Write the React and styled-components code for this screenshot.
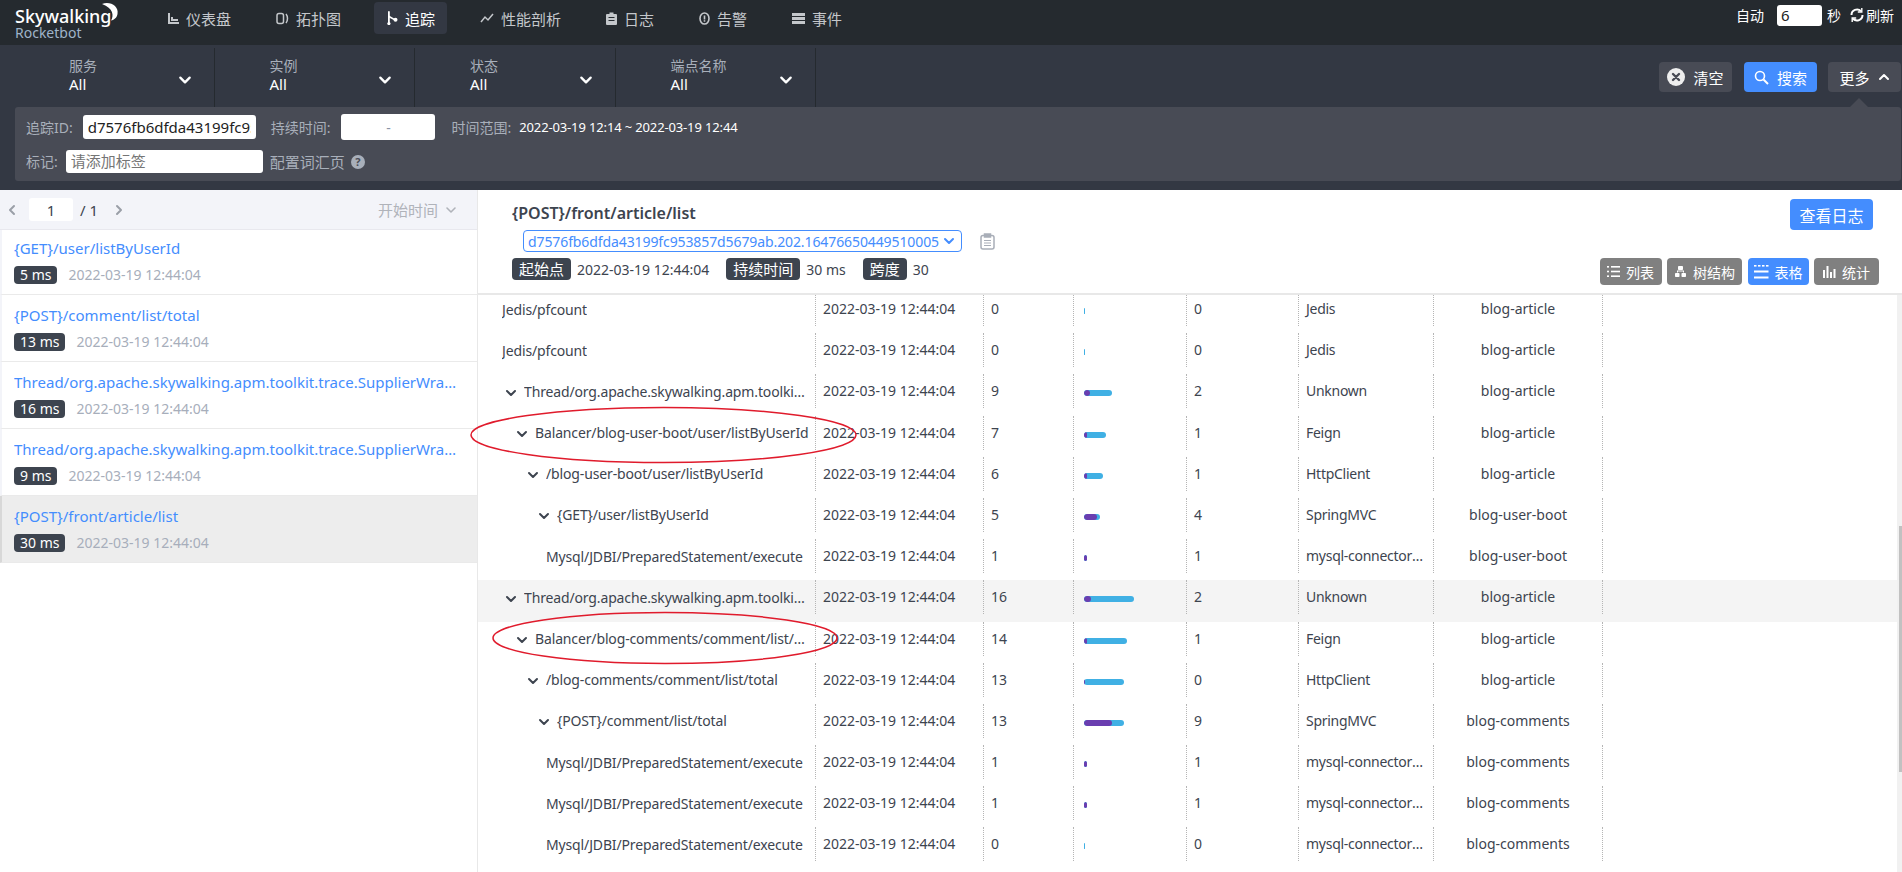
import React from 'react'
import styled, { createGlobalStyle } from 'styled-components'

const GlobalStyle = createGlobalStyle`
  html, body {
    margin: 0;
    padding: 0;
    height: 100%;
    overflow: hidden;
  }
  body {
    font-family: "Noto Sans", "Noto Sans CJK SC", sans-serif;
    font-size: 14px;
    color: #3d444f;
    background: #fff;
  }
  * {
    box-sizing: border-box;
  }
  input {
    font-family: inherit;
  }
`

const Page = styled.div`
  position: relative;
  display: flex;
  flex-direction: column;
  height: 872px;
  overflow: hidden;
`

/* top nav */
const Header = styled.header`
  display: flex;
  align-items: flex-start;
  height: 45px;
  padding: 2px 8px 0 15px;
  background: #252a2f;
  color: #fff;
`
const Logo = styled.div`
  position: relative;
  width: 141px;
  flex: none;
  margin-top: 4px;
`
const LogoTitle = styled.div`
  font-size: 18px;
  line-height: 21px;
  color: #fff;
  font-weight: 500;
`
const LogoSub = styled.div`
  font-size: 14px;
  line-height: 12px;
  color: #9fb4c9;
`
const LogoMark = styled.svg`
  position: absolute;
  left: 85px;
  top: -5px;
`
const Nav = styled.nav`
  display: flex;
  gap: 21px;
`
const NavItem = styled.a`
  display: flex;
  align-items: center;
  justify-content: center;
  gap: 7px;
  height: 32px;
  padding: 0 12px;
  border-radius: 4px;
  font-size: 15px;
  color: ${p => (p.$active ? '#fff' : '#c4c7cb')};
  background: ${p => (p.$active ? '#333843' : 'transparent')};
`
const RefreshBar = styled.div`
  display: flex;
  align-items: center;
  margin-left: auto;
  height: 26px;
  font-size: 14px;
  color: #fff;
`
const AutoInput = styled.input`
  width: 45px;
  height: 21px;
  margin: 0 5px 0 13px;
  padding: 0 0 0 4px;
  border: 0;
  border-radius: 3px;
  background: #fff;
  color: #222;
  font-size: 15px;
`
const RefreshIcon = styled.svg`
  margin: 0 1px 0 8px;
`

/* filter toolbar */
const Toolbar = styled.section`
  height: 145px;
  padding-top: 3px;
  background: #333843;
  color: #fff;
`
const FilterRow = styled.div`
  display: flex;
  align-items: flex-start;
  height: 59px;
  padding-left: 14px;
`
const Filter = styled.div`
  position: relative;
  width: 200.5px;
  height: 59px;
  padding: 8px 0 0 55px;
  border-right: 1px solid #252a2f;
`
const FilterLabel = styled.div`
  font-size: 14px;
  line-height: 20px;
  color: #a8afba;
`
const FilterValue = styled.div`
  font-size: 15px;
  line-height: 16px;
`
const FilterChevron = styled.span`
  position: absolute;
  right: 22px;
  top: 25px;
  line-height: 0;
`
const Actions = styled.div`
  display: flex;
  gap: 12px;
  margin: 14px 1px 0 auto;
`
const ActionButton = styled.button`
  display: flex;
  align-items: center;
  justify-content: center;
  gap: 8px;
  width: 73px;
  height: 30px;
  padding: 0;
  border: 0;
  border-radius: 4px;
  font: inherit;
  font-size: 15px;
  color: #fff;
  background: ${p => (p.$primary ? '#448dfe' : '#484b55')};
`
const MoreWrap = styled.div`
  position: relative;
  margin-left: -1px;
`
const MoreArrow = styled.span`
  position: absolute;
  left: 22px;
  top: 36px;
  width: 0;
  height: 0;
  border-left: 9px solid transparent;
  border-right: 9px solid transparent;
  border-bottom: 9px solid #484b55;
`
const MorePanel = styled.div`
  height: 74px;
  margin: 0 1px 0 15px;
  padding: 7px 11px 0;
  border-radius: 3px;
  background: #484b55;
  font-size: 14px;
  color: #a8afba;
`
const PanelRow = styled.div`
  display: flex;
  align-items: center;
  height: 26px;
  margin-bottom: ${p => (p.$gap ? '8px' : '0')};
`
const PanelInput = styled.input`
  flex: none;
  width: ${p => p.$w}px;
  height: ${p => p.$h || 24}px;
  margin: 0 ${p => p.$mr || 7}px 0 ${p => p.$ml || 10}px;
  padding: 0 ${p => (p.$center ? 0 : 5)}px;
  border: 0;
  border-radius: 3px;
  outline: 0;
  background: #fff;
  color: ${p => p.$color || '#222'};
  font-size: ${p => (p.$center ? 14 : 15)}px;
  text-align: ${p => (p.$center ? 'center' : 'left')};
  &::placeholder {
    color: #757575;
    opacity: 1;
    font-size: 15px;
  }
`
const RangeValue = styled.span`
  margin-left: 8px;
  font-size: 13px;
  letter-spacing: -0.14px;
  color: #fff;
`
const GlossaryLink = styled.span`
  font-size: 15px;
`
const HelpDot = styled.span`
  display: inline-block;
  width: 14px;
  height: 14px;
  margin: 2px 0 0 6px;
  border-radius: 50%;
  background: #a8afba;
  color: #484b55;
  font-size: 11px;
  font-weight: 700;
  line-height: 14px;
  text-align: center;
`

/* main split */
const Main = styled.main`
  display: flex;
  flex: 1;
  min-height: 0;
`
const Sidebar = styled.aside`
  flex: none;
  width: 478px;
  border-right: 1px solid #e8e8e8;
`
const Pager = styled.div`
  display: flex;
  align-items: center;
  height: 40px;
  padding: 0 15px 0 6px;
  background: #f3f4f9;
  border-bottom: 1px solid #e8e8ee;
  font-size: 15px;
`
const PageInput = styled.input`
  width: 44px;
  height: 23px;
  margin: 0 7px 0 11px;
  padding: 0;
  border: 0;
  border-radius: 3px;
  background: #fff;
  color: #3d444f;
  font-size: 15px;
  text-align: center;
`
const PagerNext = styled.span`
  margin-left: 15px;
  line-height: 0;
`
const SortBy = styled.div`
  display: flex;
  align-items: center;
  gap: 7px;
  margin-left: auto;
  margin-right: 5px;
  color: #b0b3ba;
`
const TraceItem = styled.div`
  height: ${p => (p.$first ? 65 : 67)}px;
  padding-top: ${p => (p.$first ? 6 : 8)}px;
  padding-left: 12px;
  border-left: 2px solid ${p => (p.$active ? '#d8d8d8' : '#f3f4f9')};
  border-bottom: 1px solid #eaeaea;
  background: ${p => (p.$active ? '#ededed' : '#fff')};
`
const TraceTitle = styled.div`
  width: 448px;
  font-size: 15px;
  line-height: 24px;
  color: #448dfe;
  white-space: nowrap;
  overflow: hidden;
  text-overflow: ellipsis;
`
const TraceMeta = styled.div`
  display: flex;
  align-items: center;
  gap: 11px;
  margin-top: 5px;
  color: #a7aebb;
`
const Badge = styled.span`
  padding: 0 6px;
  height: 18px;
  border-radius: 4px;
  background: #3d444f;
  color: #fff;
  font-size: 14px;
  line-height: 18px;
`

const Detail = styled.section`
  position: relative;
  flex: 1;
  min-width: 0;
  display: flex;
  flex-direction: column;
`
const DetailHead = styled.div`
  position: relative;
  flex: none;
  height: 105px;
  padding: 12px 0 0 34px;
  border-bottom: 2px solid #e8e8e8;
`
const DetailTitle = styled.h2`
  margin: 0;
  font-size: 16px;
  font-weight: 600;
  line-height: 22px;
  color: #3d444f;
`
const SelectRow = styled.div`
  display: flex;
  align-items: center;
  margin: 6px 0 6px 11px;
`
const SegmentSelect = styled.div`
  display: flex;
  align-items: center;
  justify-content: space-between;
  width: 439px;
  height: 22px;
  padding: 0 6px 0 4px;
  border: 1px solid #448dfe;
  border-radius: 4px;
  color: #448dfe;
  font-size: 14px;
  letter-spacing: -0.1px;
  white-space: nowrap;
  overflow: hidden;
`
const CopyIcon = styled.svg`
  margin-left: 18px;
`
const TagRow = styled.div`
  display: flex;
  align-items: center;
  height: 22px;
  font-size: 14px;
`
const Tag = styled.span`
  height: 22px;
  margin-right: 6px;
  padding: 0 7px;
  border-radius: 4px;
  background: #3d444f;
  color: #fff;
  font-size: 15px;
  line-height: 22px;
`
const TagValue = styled.span`
  margin-right: 17px;
`
const LogButton = styled.button`
  position: absolute;
  right: 29px;
  top: 9px;
  width: 83px;
  height: 31px;
  padding: 0;
  border: 0;
  border-radius: 4px;
  background: #448dfe;
  color: #fff;
  font: inherit;
  font-size: 16px;
`
const ViewTabs = styled.div`
  position: absolute;
  right: 23px;
  top: 68px;
  display: flex;
  gap: 5.5px;
`
const ViewTab = styled.span`
  display: flex;
  align-items: center;
  justify-content: center;
  gap: 6px;
  width: ${p => p.$w}px;
  height: 27px;
  border-radius: 4px;
  background: ${p => (p.$active ? '#448dfe' : '#808080')};
  color: #fff;
  font-size: 14px;
`

/* span table */
const TableArea = styled.div`
  flex: 1;
  min-height: 0;
  display: flex;
`
const TableBody = styled.div`
  flex: 1;
  min-width: 0;
  overflow: hidden;
`
const Rows = styled.div`
  margin-top: -3px;
`
const Row = styled.div`
  display: flex;
  height: 41.2px;
  background: ${p => (p.$active ? '#f4f4f4' : '#fff')};
`
const NameCell = styled.div`
  display: flex;
  align-items: center;
  flex: none;
  width: 337px;
  height: 34px;
  padding-left: ${p => 24 + p.$level * 11}px;
  padding-right: 6px;
  white-space: nowrap;
`
const Toggle = styled.span`
  flex: none;
  width: 22px;
  padding-left: 3px;
  line-height: 0;
  margin-top: 3px;
`
const NameText = styled.span`
  letter-spacing: -0.14px;
  overflow: hidden;
  text-overflow: ellipsis;
`
const Cell = styled.div`
  flex: none;
  width: ${p => p.$w}px;
  height: 34px;
  padding-left: ${p => (p.$center ? 0 : 7)}px;
  padding-right: ${p => (p.$center ? 0 : 7)}px;
  border-left: 1px dotted #b5b5b5;
  line-height: 34px;
  white-space: nowrap;
  overflow: hidden;
  text-overflow: ellipsis;
  text-align: ${p => (p.$center ? 'center' : 'left')};
  letter-spacing: ${p => (p.$tight ? '-0.27px' : 'normal')};
`
const BarCell = styled(Cell)`
  padding-left: 10px;
  padding-top: 16px;
  line-height: 0;
`
const BarOuter = styled.div`
  height: 6px;
  border-radius: 3px;
  background: #40b0e4;
  overflow: hidden;
`
const BarInner = styled.div`
  height: 6px;
  border-radius: 3px;
  background: #6a3eb0;
`
const Scrollbar = styled.div`
  flex: none;
  width: 5px;
  background: #f1f1f1;
  padding: 231px 0 0 2px;
`
const Thumb = styled.div`
  height: 246px;
  background: #c1c1c1;
`
const Annotation = styled.svg`
  position: absolute;
  left: 0;
  top: 0;
  pointer-events: none;
`

const Chevron = ({ size = 12, color = '#fff', up, width = 2, dir }) => {
  let pts = up ? '2,8 6,4 10,8' : '2,4 6,8 10,4'
  if (dir === 'left') pts = '8,2 4,6 8,10'
  if (dir === 'right') pts = '4,2 8,6 4,10'
  return (
    <svg width={size} height={size} viewBox="0 0 12 12" fill="none">
      <polyline points={pts} stroke={color} strokeWidth={width} strokeLinecap="round" strokeLinejoin="round" />
    </svg>
  )
}

const navIcons = {
  dashboard: (
    <svg width="11" height="12" viewBox="0 0 11 12" fill="currentColor">
      <path d="M0 1h2v9h9v2H0z" />
      <path d="M3 5h2v4H3zM5 7h5v2H5z" />
    </svg>
  ),
  topology: (
    <svg width="13" height="13" viewBox="0 0 13 13" fill="none" stroke="currentColor" strokeWidth="1.5">
      <rect x="1" y="1.5" width="6.5" height="10" rx="2" />
      <path d="M10 2c2 2.5 2 6.5 0 9" />
    </svg>
  ),
  trace: (
    <svg width="12" height="14" viewBox="0 0 12 14" fill="currentColor">
      <rect x="2" y="0" width="1.8" height="14" rx="0.9" />
      <path d="M3 4.5 9 8l-.8 1.3L3 6.5z" />
      <circle cx="9.5" cy="8.8" r="2" />
      <circle cx="2.9" cy="12.5" r="1.6" />
    </svg>
  ),
  profile: (
    <svg width="14" height="10" viewBox="0 0 14 10" fill="none" stroke="currentColor" strokeWidth="1.5">
      <polyline points="1,9 5,4 8,7 13,1" />
    </svg>
  ),
  log: (
    <svg width="11" height="13" viewBox="0 0 11 13" fill="currentColor">
      <path d="M1 2h2.5V.5h4V2H10a1 1 0 0 1 1 1v9a1 1 0 0 1-1 1H1a1 1 0 0 1-1-1V3a1 1 0 0 1 1-1zm1.5 3v1h6V5zm0 3v1h6V8z" fillRule="evenodd" />
    </svg>
  ),
  alarm: (
    <svg width="11" height="13" viewBox="0 0 11 13" fill="none">
      <ellipse cx="5.5" cy="6.5" rx="4.5" ry="5.5" stroke="currentColor" strokeWidth="1.6" />
      <rect x="4.7" y="3.5" width="1.6" height="4" fill="currentColor" />
      <rect x="4.7" y="8.2" width="1.6" height="1.5" fill="currentColor" />
    </svg>
  ),
  event: (
    <svg width="13" height="11" viewBox="0 0 13 11" fill="currentColor">
      <rect width="13" height="3" />
      <rect y="4" width="13" height="3" />
      <rect y="8" width="13" height="3" />
    </svg>
  ),
}

const viewIcons = {
  list: (
    <svg width="13" height="13" viewBox="0 0 13 13" fill="#fff">
      <rect x="0" y="1" width="2" height="1.6" />
      <rect x="4" y="1" width="9" height="1.6" />
      <rect x="0" y="5.7" width="2" height="1.6" />
      <rect x="4" y="5.7" width="9" height="1.6" />
      <rect x="0" y="10.4" width="2" height="1.6" />
      <rect x="4" y="10.4" width="9" height="1.6" />
    </svg>
  ),
  tree: (
    <svg width="13" height="13" viewBox="0 0 13 13" fill="#fff">
      <rect x="4" y="1" width="5" height="4" rx="0.8" />
      <rect x="1" y="8" width="4.5" height="4" rx="0.8" />
      <rect x="7.5" y="8" width="4.5" height="4" rx="0.8" />
      <path d="M3 5.5h7v2H9v-1H4v1H3z" />
    </svg>
  ),
  table: (
    <svg width="15" height="14" viewBox="0 0 15 14" fill="#fff">
      <rect x="0" y="0" width="2.5" height="1.6" />
      <rect x="4" y="0" width="2.5" height="1.6" />
      <rect x="8" y="0" width="2.5" height="1.6" />
      <rect x="12" y="0" width="2.5" height="1.6" />
      <rect x="0" y="5.5" width="14.5" height="2" />
      <rect x="0" y="11.5" width="14.5" height="2" />
    </svg>
  ),
  stats: (
    <svg width="13" height="12" viewBox="0 0 13 12" fill="#fff">
      <rect x="0" y="4" width="2" height="8" />
      <rect x="3.5" y="0" width="2" height="12" />
      <rect x="7" y="6" width="2" height="6" />
      <rect x="10.5" y="3" width="2" height="9" />
    </svg>
  ),
}

const navItems = [
  { label: '仪表盘', icon: 'dashboard' },
  { label: '拓扑图', icon: 'topology' },
  { label: '追踪', icon: 'trace', active: true },
  { label: '性能剖析', icon: 'profile' },
  { label: '日志', icon: 'log' },
  { label: '告警', icon: 'alarm' },
  { label: '事件', icon: 'event' },
]

const filters = [
  { label: '服务' },
  { label: '实例' },
  { label: '状态' },
  { label: '端点名称' },
]

const traces = [
  { title: '{GET}/user/listByUserId', ms: '5 ms' },
  { title: '{POST}/comment/list/total', ms: '13 ms' },
  { title: 'Thread/org.apache.skywalking.apm.toolkit.trace.SupplierWrapper/run', ms: '16 ms' },
  { title: 'Thread/org.apache.skywalking.apm.toolkit.trace.SupplierWrapper/run', ms: '9 ms' },
  { title: '{POST}/front/article/list', ms: '30 ms', active: true },
]

const TRACE_ID = 'd7576fb6dfda43199fc953857d5679ab.202.16476650449510005'
const DATE = '2022-03-19 12:44:04'
const MYSQL = 'Mysql/JDBI/PreparedStatement/execute'
const THREAD = 'Thread/org.apache.skywalking.apm.toolkit.trace.SupplierWrapper/run'

const spans = [
  { name: 'Jedis/pfcount', level: 0, exec: 0, bar: 1, inner: 0, self: 0, type: 'Jedis', svc: 'blog-article' },
  { name: 'Jedis/pfcount', level: 0, exec: 0, bar: 1, inner: 0, self: 0, type: 'Jedis', svc: 'blog-article' },
  { name: THREAD, level: 0, open: true, exec: 9, bar: 28, inner: 6, self: 2, type: 'Unknown', svc: 'blog-article' },
  { name: 'Balancer/blog-user-boot/user/listByUserId', level: 1, open: true, exec: 7, bar: 22, inner: 3, self: 1, type: 'Feign', svc: 'blog-article' },
  { name: '/blog-user-boot/user/listByUserId', level: 2, open: true, exec: 6, bar: 19, inner: 3, self: 1, type: 'HttpClient', svc: 'blog-article' },
  { name: '{GET}/user/listByUserId', level: 3, open: true, exec: 5, bar: 16, inner: 13, self: 4, type: 'SpringMVC', svc: 'blog-user-boot' },
  { name: MYSQL, level: 4, exec: 1, bar: 3, inner: 3, self: 1, type: 'mysql-connector-java', svc: 'blog-user-boot' },
  { name: THREAD, level: 0, open: true, active: true, exec: 16, bar: 50, inner: 7, self: 2, type: 'Unknown', svc: 'blog-article' },
  { name: 'Balancer/blog-comments/comment/list/total', level: 1, open: true, exec: 14, bar: 43, inner: 3, self: 1, type: 'Feign', svc: 'blog-article' },
  { name: '/blog-comments/comment/list/total', level: 2, open: true, exec: 13, bar: 40, inner: 1, self: 0, type: 'HttpClient', svc: 'blog-article' },
  { name: '{POST}/comment/list/total', level: 3, open: true, exec: 13, bar: 40, inner: 28, self: 9, type: 'SpringMVC', svc: 'blog-comments' },
  { name: MYSQL, level: 4, exec: 1, bar: 3, inner: 3, self: 1, type: 'mysql-connector-java', svc: 'blog-comments' },
  { name: MYSQL, level: 4, exec: 1, bar: 3, inner: 3, self: 1, type: 'mysql-connector-java', svc: 'blog-comments' },
  { name: MYSQL, level: 4, exec: 0, bar: 1, inner: 0, self: 0, type: 'mysql-connector-java', svc: 'blog-comments' },
]

const SpanRow = ({ span }) => (
  <Row $active={span.active}>
    <NameCell $level={span.level}>
      {span.open && (
        <Toggle>
          <Chevron color="#3d444f" size={12} />
        </Toggle>
      )}
      <NameText>{span.name}</NameText>
    </NameCell>
    <Cell $w={168}>{DATE}</Cell>
    <Cell $w={90}>{span.exec}</Cell>
    <BarCell $w={113}>
      <BarOuter style={{ width: span.bar }}>
        <BarInner style={{ width: span.inner }} />
      </BarOuter>
    </BarCell>
    <Cell $w={112}>{span.self}</Cell>
    <Cell $w={135} $tight>{span.type}</Cell>
    <Cell $w={169} $center>{span.svc}</Cell>
    <Cell $w={1} />
  </Row>
)

export default function App() {
  return (
    <Page>
      <GlobalStyle />
      <Header>
        <Logo>
          <LogoTitle>Skywalking</LogoTitle>
          <LogoSub>Rocketbot</LogoSub>
          <LogoMark width="20" height="22" viewBox="0 0 20 22" fill="#fff">
            <path d="M2 3C10 0 19 5 17.5 13c-.6 3.4-3 6-6.500 6.500C14 15 13.500 7 2 3z" />
          </LogoMark>
        </Logo>
        <Nav>
          {navItems.map(item => (
            <NavItem key={item.label} $active={item.active}>
              {navIcons[item.icon]}
              {item.label}
            </NavItem>
          ))}
        </Nav>
        <RefreshBar>
          自动
          <AutoInput readOnly value="6" />
          秒
          <RefreshIcon width="16" height="16" viewBox="0 0 16 16" fill="none" stroke="#fff" strokeWidth="2">
            <path d="M2.500 8a5.500 5.500 0 0 1 9.500-3.800M13.500 8A5.500 5.500 0 0 1 4 11.800" />
            <path d="M12.800 1v4h-4M3.200 15v-4h4" strokeWidth="1.400" />
          </RefreshIcon>
          刷新
        </RefreshBar>
      </Header>

      <Toolbar>
        <FilterRow>
          {filters.map(f => (
            <Filter key={f.label}>
              <FilterLabel>{f.label}</FilterLabel>
              <FilterValue>All</FilterValue>
              <FilterChevron>
                <Chevron size={14} width={2} />
              </FilterChevron>
            </Filter>
          ))}
          <Actions>
            <ActionButton>
              <svg width="18" height="18" viewBox="0 0 18 18">
                <circle cx="9" cy="9" r="9" fill="#eee" />
                <path d="M6 6l6 6M12 6l-6 6" stroke="#484b55" strokeWidth="2.400" strokeLinecap="round" />
              </svg>
              清空
            </ActionButton>
            <ActionButton $primary>
              <svg width="15" height="15" viewBox="0 0 15 15" fill="none" stroke="#fff" strokeWidth="1.600">
                <circle cx="6" cy="6" r="4.500" />
                <path d="M9.500 9.500 14 14" strokeWidth="2" />
              </svg>
              搜索
            </ActionButton>
            <MoreWrap>
              <ActionButton>
                更多
                <Chevron size={12} up width={2} />
              </ActionButton>
              <MoreArrow />
            </MoreWrap>
          </Actions>
        </FilterRow>
        <MorePanel>
          <PanelRow $gap>
            追踪ID:
            <PanelInput $w={173} $mr={15} readOnly value={TRACE_ID} />
            持续时间:
            <PanelInput $w={94} $h={26} $ml={11} $mr={16} $center $color="#8a94a6" readOnly value="-" />
            时间范围:
            <RangeValue>2022-03-19 12:14 ~ 2022-03-19 12:44</RangeValue>
          </PanelRow>
          <PanelRow>
            标记:
            <PanelInput $w={197} $h={23} $ml={8} placeholder="请添加标签" />
            <GlossaryLink>配置词汇页</GlossaryLink>
            <HelpDot>?</HelpDot>
          </PanelRow>
        </MorePanel>
      </Toolbar>

      <Main>
        <Sidebar>
          <Pager>
            <Chevron size={12} color="#9a9fa8" dir="left" />
            <PageInput readOnly value="1" />
            / 1
            <PagerNext>
              <Chevron size={12} color="#9a9fa8" dir="right" />
            </PagerNext>
            <SortBy>
              开始时间
              <Chevron size={12} color="#b0b3ba" width={1.600} />
            </SortBy>
          </Pager>
          {traces.map((t, i) => (
            <TraceItem key={i} $active={t.active} $first={i === 0}>
              <TraceTitle>{t.title}</TraceTitle>
              <TraceMeta>
                <Badge>{t.ms}</Badge>
                {DATE}
              </TraceMeta>
            </TraceItem>
          ))}
        </Sidebar>

        <Detail>
          <DetailHead>
            <DetailTitle>{'{POST}/front/article/list'}</DetailTitle>
            <SelectRow>
              <SegmentSelect>
                {TRACE_ID}
                <Chevron size={12} color="#448dfe" />
              </SegmentSelect>
              <CopyIcon width="15" height="17" viewBox="0 0 15 17" fill="none" stroke="#a9aeb8" strokeWidth="1.500">
                <rect x="1" y="2.500" width="13" height="13.500" rx="2" />
                <rect x="4.500" y="1" width="6" height="3" fill="#a9aeb8" />
                <path d="M4 7.500h7M4 10h7M4 12.500h7" strokeWidth="1.200" />
              </CopyIcon>
            </SelectRow>
            <TagRow>
              <Tag>起始点</Tag>
              <TagValue>{DATE}</TagValue>
              <Tag>持续时间</Tag>
              <TagValue>30 ms</TagValue>
              <Tag>跨度</Tag>
              <TagValue>30</TagValue>
            </TagRow>
            <LogButton>查看日志</LogButton>
            <ViewTabs>
              <ViewTab $w={62}>{viewIcons.list}列表</ViewTab>
              <ViewTab $w={75}>{viewIcons.tree}树结构</ViewTab>
              <ViewTab $w={61} $active>{viewIcons.table}表格</ViewTab>
              <ViewTab $w={65}>{viewIcons.stats}统计</ViewTab>
            </ViewTabs>
          </DetailHead>
          <TableArea>
            <TableBody>
              <Rows>
                {spans.map((s, i) => (
                  <SpanRow key={i} span={s} />
                ))}
              </Rows>
            </TableBody>
            <Scrollbar>
              <Thumb />
            </Scrollbar>
          </TableArea>
        </Detail>
      </Main>

      <Annotation width="1902" height="872" fill="none" stroke="#e01b2c" strokeWidth="1.500">
        <ellipse cx="663.500" cy="435" rx="192.500" ry="27.500" />
        <ellipse cx="665" cy="638" rx="172" ry="25.500" />
      </Annotation>
    </Page>
  )
}
